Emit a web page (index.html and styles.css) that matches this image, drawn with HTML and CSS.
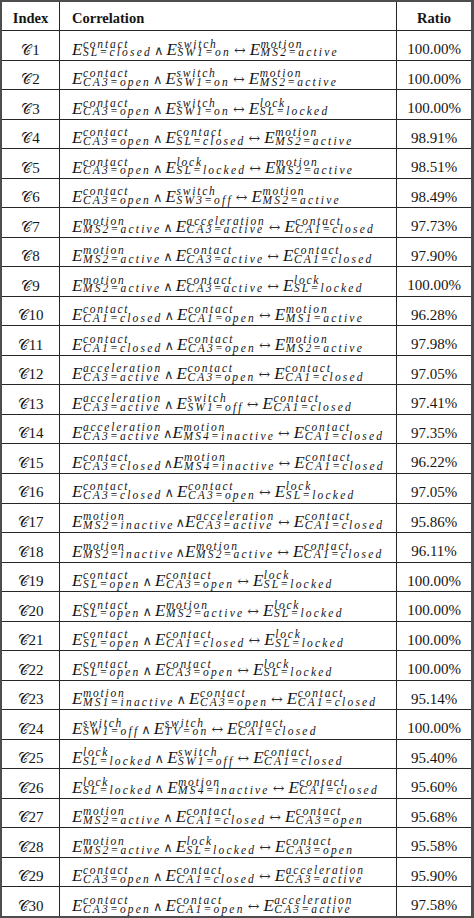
FILE: index.html
```html
<!DOCTYPE html>
<html>
<head>
<meta charset="utf-8">
<link rel="stylesheet" href="styles.css">
</head>
<body>
<div class="table">
  <div class="row head">
    <div class="cell idx">Index</div>
    <div class="cell corr">Correlation</div>
    <div class="cell ratio">Ratio</div>
  </div>

  <div class="row"><div class="cell idx"><span class="cal">𝒞</span>1</div><div class="cell corr"><span class="E">E</span><span class="ss"><span>contact</span><span>SL=closed</span></span><span class="op">∧</span><span class="E">E</span><span class="ss"><span>switch</span><span>SW1=on</span></span><span class="op arr">↔</span><span class="E">E</span><span class="ss"><span>motion</span><span>MS2=active</span></span></div><div class="cell ratio">100.00%</div></div>

  <div class="row"><div class="cell idx"><span class="cal">𝒞</span>2</div><div class="cell corr"><span class="E">E</span><span class="ss"><span>contact</span><span>CA3=open</span></span><span class="op">∧</span><span class="E">E</span><span class="ss"><span>switch</span><span>SW1=on</span></span><span class="op arr">↔</span><span class="E">E</span><span class="ss"><span>motion</span><span>MS2=active</span></span></div><div class="cell ratio">100.00%</div></div>

  <div class="row"><div class="cell idx"><span class="cal">𝒞</span>3</div><div class="cell corr"><span class="E">E</span><span class="ss"><span>contact</span><span>CA3=open</span></span><span class="op">∧</span><span class="E">E</span><span class="ss"><span>switch</span><span>SW1=on</span></span><span class="op arr">↔</span><span class="E">E</span><span class="ss"><span>lock</span><span>SL=locked</span></span></div><div class="cell ratio">100.00%</div></div>

  <div class="row"><div class="cell idx"><span class="cal">𝒞</span>4</div><div class="cell corr"><span class="E">E</span><span class="ss"><span>contact</span><span>CA3=open</span></span><span class="op">∧</span><span class="E">E</span><span class="ss"><span>contact</span><span>SL=closed</span></span><span class="op arr">↔</span><span class="E">E</span><span class="ss"><span>motion</span><span>MS2=active</span></span></div><div class="cell ratio">98.91%</div></div>

  <div class="row"><div class="cell idx"><span class="cal">𝒞</span>5</div><div class="cell corr"><span class="E">E</span><span class="ss"><span>contact</span><span>CA3=open</span></span><span class="op">∧</span><span class="E">E</span><span class="ss"><span>lock</span><span>SL=locked</span></span><span class="op arr">↔</span><span class="E">E</span><span class="ss"><span>motion</span><span>MS2=active</span></span></div><div class="cell ratio">98.51%</div></div>

  <div class="row"><div class="cell idx"><span class="cal">𝒞</span>6</div><div class="cell corr"><span class="E">E</span><span class="ss"><span>contact</span><span>CA3=open</span></span><span class="op">∧</span><span class="E">E</span><span class="ss"><span>switch</span><span>SW3=off</span></span><span class="op arr">↔</span><span class="E">E</span><span class="ss"><span>motion</span><span>MS2=active</span></span></div><div class="cell ratio">98.49%</div></div>

  <div class="row"><div class="cell idx"><span class="cal">𝒞</span>7</div><div class="cell corr"><span class="E">E</span><span class="ss"><span>motion</span><span>MS2=active</span></span><span class="op">∧</span><span class="E">E</span><span class="ss"><span>acceleration</span><span>CA3=active</span></span><span class="op arr">↔</span><span class="E">E</span><span class="ss"><span>contact</span><span>CA1=closed</span></span></div><div class="cell ratio">97.73%</div></div>

  <div class="row"><div class="cell idx"><span class="cal">𝒞</span>8</div><div class="cell corr"><span class="E">E</span><span class="ss"><span>motion</span><span>MS2=active</span></span><span class="op">∧</span><span class="E">E</span><span class="ss"><span>contact</span><span>CA3=active</span></span><span class="op arr">↔</span><span class="E">E</span><span class="ss"><span>contact</span><span>CA1=closed</span></span></div><div class="cell ratio">97.90%</div></div>

  <div class="row"><div class="cell idx"><span class="cal">𝒞</span>9</div><div class="cell corr"><span class="E">E</span><span class="ss"><span>motion</span><span>MS2=active</span></span><span class="op">∧</span><span class="E">E</span><span class="ss"><span>contact</span><span>CA3=active</span></span><span class="op arr">↔</span><span class="E">E</span><span class="ss"><span>lock</span><span>SL=locked</span></span></div><div class="cell ratio">100.00%</div></div>

  <div class="row"><div class="cell idx"><span class="cal">𝒞</span>10</div><div class="cell corr"><span class="E">E</span><span class="ss"><span>contact</span><span>CA1=closed</span></span><span class="op">∧</span><span class="E">E</span><span class="ss"><span>contact</span><span>CA1=open</span></span><span class="op arr">↔</span><span class="E">E</span><span class="ss"><span>motion</span><span>MS1=active</span></span></div><div class="cell ratio">96.28%</div></div>

  <div class="row"><div class="cell idx"><span class="cal">𝒞</span>11</div><div class="cell corr"><span class="E">E</span><span class="ss"><span>contact</span><span>CA1=closed</span></span><span class="op">∧</span><span class="E">E</span><span class="ss"><span>contact</span><span>CA3=open</span></span><span class="op arr">↔</span><span class="E">E</span><span class="ss"><span>motion</span><span>MS2=active</span></span></div><div class="cell ratio">97.98%</div></div>

  <div class="row"><div class="cell idx"><span class="cal">𝒞</span>12</div><div class="cell corr"><span class="E">E</span><span class="ss"><span>acceleration</span><span>CA3=active</span></span><span class="op">∧</span><span class="E">E</span><span class="ss"><span>contact</span><span>CA3=open</span></span><span class="op arr">↔</span><span class="E">E</span><span class="ss"><span>contact</span><span>CA1=closed</span></span></div><div class="cell ratio">97.05%</div></div>

  <div class="row"><div class="cell idx"><span class="cal">𝒞</span>13</div><div class="cell corr"><span class="E">E</span><span class="ss"><span>acceleration</span><span>CA3=active</span></span><span class="op">∧</span><span class="E">E</span><span class="ss"><span>switch</span><span>SW1=off</span></span><span class="op arr">↔</span><span class="E">E</span><span class="ss"><span>contact</span><span>CA1=closed</span></span></div><div class="cell ratio">97.41%</div></div>

  <div class="row"><div class="cell idx"><span class="cal">𝒞</span>14</div><div class="cell corr"><span class="E">E</span><span class="ss"><span>acceleration</span><span>CA3=active</span></span><span class="op tight">∧</span><span class="E">E</span><span class="ss"><span>motion</span><span>MS4=inactive</span></span><span class="op arr">↔</span><span class="E">E</span><span class="ss"><span>contact</span><span>CA1=closed</span></span></div><div class="cell ratio">97.35%</div></div>

  <div class="row"><div class="cell idx"><span class="cal">𝒞</span>15</div><div class="cell corr"><span class="E">E</span><span class="ss"><span>contact</span><span>CA3=closed</span></span><span class="op tight">∧</span><span class="E">E</span><span class="ss"><span>motion</span><span>MS4=inactive</span></span><span class="op arr">↔</span><span class="E">E</span><span class="ss"><span>contact</span><span>CA1=closed</span></span></div><div class="cell ratio">96.22%</div></div>

  <div class="row"><div class="cell idx"><span class="cal">𝒞</span>16</div><div class="cell corr"><span class="E">E</span><span class="ss"><span>contact</span><span>CA3=closed</span></span><span class="op">∧</span><span class="E">E</span><span class="ss"><span>contact</span><span>CA3=open</span></span><span class="op arr">↔</span><span class="E">E</span><span class="ss"><span>lock</span><span>SL=locked</span></span></div><div class="cell ratio">97.05%</div></div>

  <div class="row"><div class="cell idx"><span class="cal">𝒞</span>17</div><div class="cell corr"><span class="E">E</span><span class="ss"><span>motion</span><span>MS2=inactive</span></span><span class="op tight">∧</span><span class="E">E</span><span class="ss"><span>acceleration</span><span>CA3=active</span></span><span class="op arr">↔</span><span class="E">E</span><span class="ss"><span>contact</span><span>CA1=closed</span></span></div><div class="cell ratio">95.86%</div></div>

  <div class="row"><div class="cell idx"><span class="cal">𝒞</span>18</div><div class="cell corr"><span class="E">E</span><span class="ss"><span>motion</span><span>MS2=inactive</span></span><span class="op tight">∧</span><span class="E">E</span><span class="ss"><span>motion</span><span>MS2=active</span></span><span class="op arr">↔</span><span class="E">E</span><span class="ss"><span>contact</span><span>CA1=closed</span></span></div><div class="cell ratio">96.11%</div></div>

  <div class="row"><div class="cell idx"><span class="cal">𝒞</span>19</div><div class="cell corr"><span class="E">E</span><span class="ss"><span>contact</span><span>SL=open</span></span><span class="op">∧</span><span class="E">E</span><span class="ss"><span>contact</span><span>CA3=open</span></span><span class="op arr">↔</span><span class="E">E</span><span class="ss"><span>lock</span><span>SL=locked</span></span></div><div class="cell ratio">100.00%</div></div>

  <div class="row"><div class="cell idx"><span class="cal">𝒞</span>20</div><div class="cell corr"><span class="E">E</span><span class="ss"><span>contact</span><span>SL=open</span></span><span class="op">∧</span><span class="E">E</span><span class="ss"><span>motion</span><span>MS2=active</span></span><span class="op arr">↔</span><span class="E">E</span><span class="ss"><span>lock</span><span>SL=locked</span></span></div><div class="cell ratio">100.00%</div></div>

  <div class="row"><div class="cell idx"><span class="cal">𝒞</span>21</div><div class="cell corr"><span class="E">E</span><span class="ss"><span>contact</span><span>SL=open</span></span><span class="op">∧</span><span class="E">E</span><span class="ss"><span>contact</span><span>CA1=closed</span></span><span class="op arr">↔</span><span class="E">E</span><span class="ss"><span>lock</span><span>SL=locked</span></span></div><div class="cell ratio">100.00%</div></div>

  <div class="row"><div class="cell idx"><span class="cal">𝒞</span>22</div><div class="cell corr"><span class="E">E</span><span class="ss"><span>contact</span><span>SL=open</span></span><span class="op">∧</span><span class="E">E</span><span class="ss"><span>contact</span><span>CA3=open</span></span><span class="op arr">↔</span><span class="E">E</span><span class="ss"><span>lock</span><span>SL=locked</span></span></div><div class="cell ratio">100.00%</div></div>

  <div class="row"><div class="cell idx"><span class="cal">𝒞</span>23</div><div class="cell corr"><span class="E">E</span><span class="ss"><span>motion</span><span>MS1=inactive</span></span><span class="op">∧</span><span class="E">E</span><span class="ss"><span>contact</span><span>CA3=open</span></span><span class="op arr">↔</span><span class="E">E</span><span class="ss"><span>contact</span><span>CA1=closed</span></span></div><div class="cell ratio">95.14%</div></div>

  <div class="row"><div class="cell idx"><span class="cal">𝒞</span>24</div><div class="cell corr"><span class="E">E</span><span class="ss"><span>switch</span><span>SW1=off</span></span><span class="op">∧</span><span class="E">E</span><span class="ss"><span>switch</span><span>TV=on</span></span><span class="op arr">↔</span><span class="E">E</span><span class="ss"><span>contact</span><span>CA1=closed</span></span></div><div class="cell ratio">100.00%</div></div>

  <div class="row"><div class="cell idx"><span class="cal">𝒞</span>25</div><div class="cell corr"><span class="E">E</span><span class="ss"><span>lock</span><span>SL=locked</span></span><span class="op">∧</span><span class="E">E</span><span class="ss"><span>switch</span><span>SW1=off</span></span><span class="op arr">↔</span><span class="E">E</span><span class="ss"><span>contact</span><span>CA1=closed</span></span></div><div class="cell ratio">95.40%</div></div>

  <div class="row"><div class="cell idx"><span class="cal">𝒞</span>26</div><div class="cell corr"><span class="E">E</span><span class="ss"><span>lock</span><span>SL=locked</span></span><span class="op">∧</span><span class="E">E</span><span class="ss"><span>motion</span><span>MS4=inactive</span></span><span class="op arr">↔</span><span class="E">E</span><span class="ss"><span>contact</span><span>CA1=closed</span></span></div><div class="cell ratio">95.60%</div></div>

  <div class="row"><div class="cell idx"><span class="cal">𝒞</span>27</div><div class="cell corr"><span class="E">E</span><span class="ss"><span>motion</span><span>MS2=active</span></span><span class="op">∧</span><span class="E">E</span><span class="ss"><span>contact</span><span>CA1=closed</span></span><span class="op arr">↔</span><span class="E">E</span><span class="ss"><span>contact</span><span>CA3=open</span></span></div><div class="cell ratio">95.68%</div></div>

  <div class="row"><div class="cell idx"><span class="cal">𝒞</span>28</div><div class="cell corr"><span class="E">E</span><span class="ss"><span>motion</span><span>MS2=active</span></span><span class="op">∧</span><span class="E">E</span><span class="ss"><span>lock</span><span>SL=locked</span></span><span class="op arr">↔</span><span class="E">E</span><span class="ss"><span>contact</span><span>CA3=open</span></span></div><div class="cell ratio">95.58%</div></div>

  <div class="row"><div class="cell idx"><span class="cal">𝒞</span>29</div><div class="cell corr"><span class="E">E</span><span class="ss"><span>contact</span><span>CA3=open</span></span><span class="op">∧</span><span class="E">E</span><span class="ss"><span>contact</span><span>CA1=closed</span></span><span class="op arr">↔</span><span class="E">E</span><span class="ss"><span>acceleration</span><span>CA3=active</span></span></div><div class="cell ratio">95.90%</div></div>

  <div class="row"><div class="cell idx"><span class="cal">𝒞</span>30</div><div class="cell corr"><span class="E">E</span><span class="ss"><span>contact</span><span>CA3=open</span></span><span class="op">∧</span><span class="E">E</span><span class="ss"><span>contact</span><span>CA1=open</span></span><span class="op arr">↔</span><span class="E">E</span><span class="ss"><span>acceleration</span><span>CA3=active</span></span></div><div class="cell ratio">97.58%</div></div>
</div>
</body>
</html>
```

FILE: styles.css
```css
html, body {
  margin: 0;
  padding: 0;
  background: #ffffff;
}

.table {
  width: 474px;
  height: 918px;
  box-sizing: border-box;
  border: 2px solid #4d4d4d;
  border-right-width: 3px;
  display: flex;
  flex-direction: column;
  font-family: "Liberation Serif", "Times New Roman", serif;
  color: #151515;
}

.row {
  display: grid;
  grid-template-columns: 58px 337px 1fr;
  flex: 1 1 0;
  min-height: 0;
  border-bottom: 1px solid #262626;
}

.row:last-child {
  border-bottom: none;
}

.cell {
  border-right: 1px solid #262626;
  white-space: nowrap;
  overflow: hidden;
  line-height: 20px;
}

.cell:last-child {
  border-right: none;
}

.idx {
  text-align: center;
  font-size: 15px;
  padding-top: 8.5px;
}

.cal {
  font-family: "DejaVu Serif", "DejaVu Sans", "Noto Sans", serif;
  font-size: 14px;
  margin-right: 1px;
}

.corr {
  padding-left: 12px;
  padding-top: 8.5px;
  font-size: 17px;
}

.ratio {
  text-align: center;
  font-size: 15px;
  padding-top: 8px;
}

.head {
  flex: 0 0 28px;
  font-weight: bold;
}

.head .cell {
  font-size: 14.5px;
  padding-top: 6px;
}

.E {
  font-style: italic;
  font-size: 17px;
}

.ss {
  display: inline-flex;
  flex-direction: column;
  vertical-align: 7px;
  font-style: italic;
  font-size: 11.5px;
  line-height: 8.7px;
  margin-left: 0.5px;
}

.ss > span:first-child {
  letter-spacing: 1.8px;
}

.ss > span:last-child {
  letter-spacing: 2.2px;
}

.op {
  font-family: "DejaVu Serif", "DejaVu Sans", serif;
  font-size: 13px;
  color: #2a2a2a;
  margin: 0 3px 0 2px;
}

.op.arr {
  font-family: "DejaVu Serif", "DejaVu Sans", serif;
  font-size: 14px;
  margin: 0 4px 0 3px;
}

.op.tight {
  margin: 0 0 0 1px;
}
```
